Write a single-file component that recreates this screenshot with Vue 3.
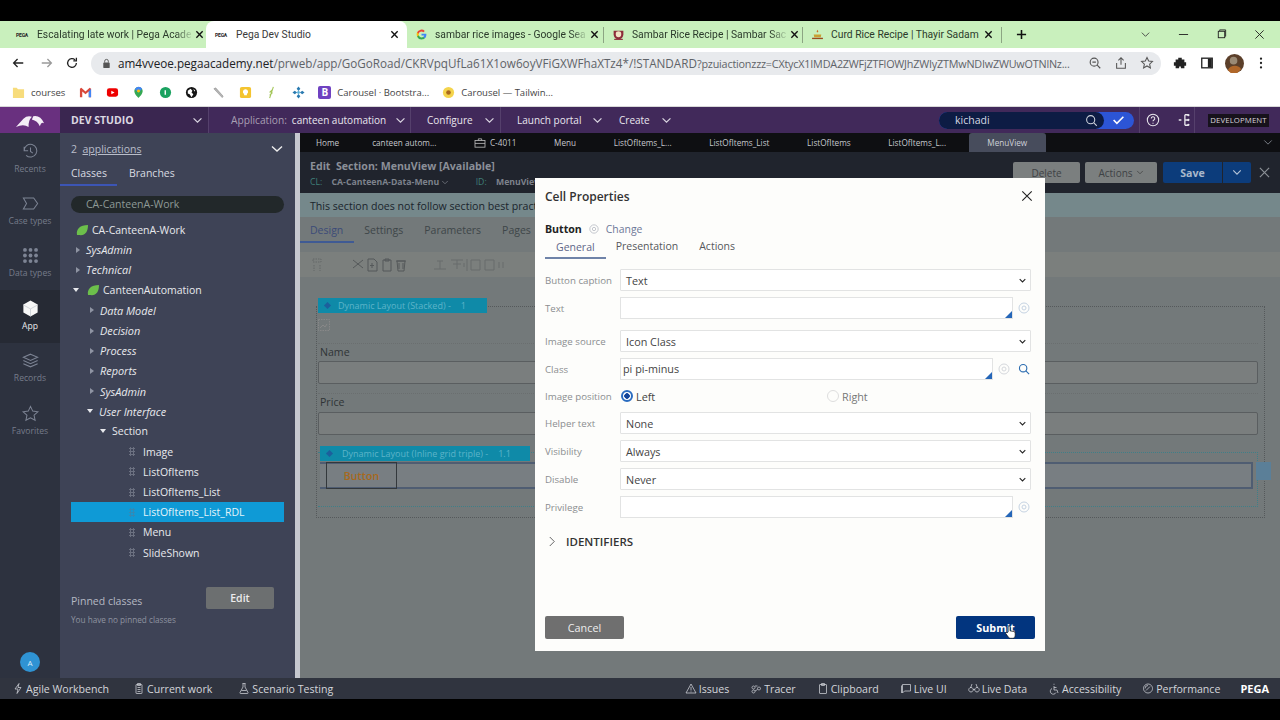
<script setup>
const tabs = [
  { title: 'Escalating late work | Pega Acade', fav: 'pega', cls: 't1' },
  { title: 'Pega Dev Studio', fav: 'pega', cls: 't2 active' },
  { title: 'sambar rice images - Google Sea', fav: 'g', cls: 't3' },
  { title: 'Sambar Rice Recipe | Sambar Sac', fav: 's', cls: 't4' },
  { title: 'Curd Rice Recipe | Thayir Sadam', fav: 'c', cls: 't5' }
]
const rail = [
  { label: 'Recents', d: 'M4 11a8 8 0 1 1 2.5 5.8M4 6v5h5M12 7v5l3 2' },
  { label: 'Case types', d: 'M3 5h13l5 7-5 7H3l4-7z' },
  { label: 'Data types', dots: true },
  { label: 'App', cube: true, active: true },
  { label: 'Records', d: 'M12 4l9 4-9 4-9-4zM3 12l9 4 9-4M3 16l9 4 9-4' },
  { label: 'Favorites', d: 'M12 3l2.8 6 6.5.8-4.8 4.4 1.3 6.4-5.8-3.2-5.8 3.2 1.3-6.4L2.700 9.800 9.200 9z' }
]
const tree = [
  { t: 'CA-CanteenA-Work', x: 76, leaf: true },
  { t: 'SysAdmin', x: 73, arrow: 'r', it: true },
  { t: 'Technical', x: 73, arrow: 'r', it: true },
  { t: 'CanteenAutomation', x: 73, arrow: 'd', leaf: true },
  { t: 'Data Model', x: 87, arrow: 'r', it: true },
  { t: 'Decision', x: 87, arrow: 'r', it: true },
  { t: 'Process', x: 87, arrow: 'r', it: true },
  { t: 'Reports', x: 87, arrow: 'r', it: true },
  { t: 'SysAdmin', x: 87, arrow: 'r', it: true },
  { t: 'User Interface', x: 87, arrow: 'd', it: true },
  { t: 'Section', x: 100, arrow: 'd' },
  { t: 'Image', x: 129, grip: true },
  { t: 'ListOfItems', x: 129, grip: true },
  { t: 'ListOfItems_List', x: 129, grip: true },
  { t: 'ListOfItems_List_RDL', x: 129, grip: true, picked: true },
  { t: 'Menu', x: 129, grip: true },
  { t: 'SlideShown', x: 129, grip: true }
]
const work = ['Home', 'canteen autom...', 'C-4011', 'Menu', 'ListOfItems_L...', 'ListOfItems_List', 'ListOfItems', 'ListOfItems_L...']
const bottomLeft = [
  { t: 'Agile Workbench', d: 'M14 2L6 13h6l-2 9 8-12h-6z' },
  { t: 'Current work', d: 'M7 4h10a1 1 0 0 1 1 1v16a1 1 0 0 1-1 1H7a1 1 0 0 1-1-1V5a1 1 0 0 1 1-1zM9 2h6v4H9zM9 10h6M9 14h6M9 18h6' },
  { t: 'Scenario Testing', d: 'M9 2h6M10 2v7L4 20a1.500 1.500 0 0 0 1.300 2h13.400a1.500 1.500 0 0 0 1.300-2L14 9V2M7 16h10' }
]
const bottomRight = [
  { t: 'Issues', d: 'M12 3l10 18H2zM12 9v7M12 18v1.500' },
  { t: 'Tracer', d: 'M7 7a3 3 0 1 0 .01 0M7 15a3 3 0 1 0 .01 0M18 9a3 3 0 1 0 .01 0M10 7h5M10 17l5-3' },
  { t: 'Clipboard', d: 'M6 4h12a1 1 0 0 1 1 1v16a1 1 0 0 1-1 1H6a1 1 0 0 1-1-1V5a1 1 0 0 1 1-1zM9 2h6v4H9z' },
  { t: 'Live UI', d: 'M5 4h16v13H9l-4 4zM3 6v15' },
  { t: 'Live Data', d: 'M6 10a4.500 4.500 0 1 0 .01 0M18 10a4.500 4.500 0 1 0 .01 0M10 14h4M5 11l3-8M19 11l-3-8' },
  { t: 'Accessibility', d: 'M12 2.500v2M12 7v8h6l2 6M12 10h5M8 12a6 6 0 1 0 8 8' },
  { t: 'Performance', d: 'M12 3a9 9 0 1 0 .01 0M8 16l8-8M6 12a6 6 0 0 1 6-6' }
]
const selectRows = { caption: 'Text', source: 'Icon Class', helper: 'None', vis: 'Always', dis: 'Never' }
</script>

<template>
  <div class="page">
    <div class="topblack"></div>

    <div class="tabstrip">
      <div v-for="tab in tabs" :key="tab.title" class="tab" :class="tab.cls">
        <span v-if="tab.fav === 'pega'" class="fav-pega">PEGA</span>
        <svg v-else-if="tab.fav === 'g'" class="fav" viewBox="0 0 24 24">
          <path d="M21 12.300c0-.7-.1-1.300-.2-1.900H12v3.600h5a4.300 4.300 0 0 1-1.900 2.800v2.300h3c1.800-1.600 2.900-4 2.900-6.800z" fill="#4285f4"/>
          <path d="M12 21c2.500 0 4.500-.8 6.100-2.200l-3-2.300c-.8.600-1.900.9-3.100.9-2.400 0-4.400-1.600-5.100-3.800H3.800v2.400A9 9 0 0 0 12 21z" fill="#34a853"/>
          <path d="M6.900 13.600a5.400 5.400 0 0 1 0-3.200V8H3.800a9 9 0 0 0 0 8z" fill="#fbbc05"/>
          <path d="M12 6.600c1.300 0 2.500.5 3.500 1.400l2.600-2.600A9 9 0 0 0 3.800 8l3.100 2.400C7.600 8.200 9.600 6.600 12 6.600z" fill="#ea4335"/>
        </svg>
        <svg v-else-if="tab.fav === 's'" class="fav" viewBox="0 0 24 24">
          <path d="M3 5h18v7a9 9 0 0 1-18 0z" fill="#8d2d3a"/><path d="M7 9a5 3 0 0 1 10 0v3a5 5 0 0 1-10 0z" fill="#f1e2c4"/><rect x="4" y="20" width="16" height="2" fill="#8d2d3a"/>
        </svg>
        <svg v-else class="fav" viewBox="0 0 24 24">
          <path d="M12 3c1 2 2 3 1 5h-2c-1-2 0-3 1-5z" fill="#c96a24"/><path d="M5 12h14l-1 5H6z" fill="#c9a033"/><rect x="2" y="18" width="20" height="2.500" fill="#9b4a20"/>
        </svg>
        <span class="tab-title">{{ tab.title }}</span>
        <svg class="tab-x" viewBox="0 0 10 10"><path d="M1.500 1.500l7 7M8.500 1.500l-7 7" stroke="#111" stroke-width="1.500"/></svg>
      </div>
      <svg class="plus" viewBox="0 0 12 12"><path d="M6 1v10M1 6h10" stroke="#111" stroke-width="1.700"/></svg>
      <div class="winctl">
        <svg viewBox="0 0 12 12"><path d="M2 4l4 4 4-4" stroke="#444" fill="none"/></svg>
        <svg viewBox="0 0 12 12"><path d="M1 6h10" stroke="#222"/></svg>
        <svg viewBox="0 0 12 12"><rect x="2.500" y="2.500" width="7" height="7" stroke="#222" fill="none"/><path d="M4 2V1h6.500v7H10" stroke="#222" fill="none"/></svg>
        <svg viewBox="0 0 12 12"><path d="M1.500 1.500l9 9M10.500 1.500l-9 9" stroke="#222"/></svg>
      </div>
    </div>

    <div class="toolbar">
      <svg class="nav" viewBox="0 0 16 16"><path d="M14 8H3M7.500 3.500L3 8l4.500 4.500" stroke="#222" stroke-width="1.500" fill="none"/></svg>
      <svg class="nav n2" viewBox="0 0 16 16"><path d="M2 8h11M8.500 3.500L13 8l-4.500 4.500" stroke="#9a9a9a" stroke-width="1.500" fill="none"/></svg>
      <svg class="nav n3" viewBox="0 0 16 16"><path d="M13 8a5 5 0 1 1-1.500-3.600M13 2v3.500H9.500" stroke="#222" stroke-width="1.500" fill="none"/></svg>
      <div class="url">
        <svg class="lock" viewBox="0 0 12 12"><rect x="2.500" y="5" width="7" height="6" rx="1" fill="#555"/><path d="M4 5V3.500a2 2 0 0 1 4 0V5" stroke="#555" fill="none"/></svg>
        <span class="url-text"><b>am4vveoe.pegaacademy.net</b>/prweb/app/GoGoRoad/CKRVpqUfLa61X1ow6oyVFiGXWFhaXTz4*/!STANDARD<span class="url-tail">?pzuiactionzzz=CXtycX1IMDA2ZWFjZTFlOWJhZWIyZTMwNDIwZWUwOTNlNz...</span></span>
        <svg class="uicon" viewBox="0 0 16 16"><circle cx="7" cy="7" r="4.500" stroke="#555" fill="none" stroke-width="1.300"/><path d="M10.500 10.500L14 14M5 7h4" stroke="#555" stroke-width="1.300"/></svg>
        <svg class="uicon" viewBox="0 0 16 16"><path d="M3 8v6h10V8M8 10V3M5 5l3-3 3 3" stroke="#555" fill="none" stroke-width="1.200"/></svg>
        <svg class="uicon" viewBox="0 0 16 16"><path d="M8 1.800l1.900 4 4.300.5-3.200 3 .9 4.300L8 11.400l-3.900 2.200.9-4.300-3.200-3 4.300-.5z" stroke="#555" fill="none" stroke-width="1.200"/></svg>
      </div>
      <svg class="tool t-a" viewBox="0 0 16 16"><path d="M6 2h4v2h3v3h2v4h-2v3H9v-2H7v2H3v-3H1V7h2V4h3z" fill="#222"/></svg>
      <svg class="tool" viewBox="0 0 16 16"><rect x="2" y="2.500" width="12" height="11" stroke="#222" stroke-width="1.500" fill="none"/><rect x="9" y="3" width="4.500" height="10" fill="#222"/></svg>
      <svg class="avatar" viewBox="0 0 20 20"><circle cx="10" cy="10" r="10" fill="#5b3f2a"/><circle cx="9" cy="7" r="4" fill="#9a8a75"/><path d="M3 17c2-6 12-6 14-1l-4 4H6z" fill="#b0672a"/></svg>
      <svg class="kebab" viewBox="0 0 4 16"><circle cx="2" cy="3" r="1.300" fill="#222"/><circle cx="2" cy="8" r="1.300" fill="#222"/><circle cx="2" cy="13" r="1.300" fill="#222"/></svg>
    </div>

    <div class="bookmarks">
      <svg class="bm first" viewBox="0 0 14 14"><path d="M1 2h4l1.500 1.500H13V13H1z" fill="#f7dc7c"/></svg>
      <span class="bm-text courses">courses</span>
      <svg class="bm" viewBox="0 0 14 14"><path d="M1 3v9h2.500V6L7 9l3.500-3v6H13V3l-1.500-1L7 6 2.500 2z" fill="#d9483b"/><path d="M10.500 6L13 3v9h-2.500z" fill="#4285f4"/></svg>
      <svg class="bm" viewBox="0 0 14 14"><rect x="1" y="2.500" width="12" height="9" rx="2.500" fill="#e00"/><path d="M5.700 5v4l3.500-2z" fill="#fff"/></svg>
      <svg class="bm" viewBox="0 0 14 14"><path d="M7 1a4.500 4.500 0 0 0-4.500 4.500C2.500 9 7 13 7 13s4.500-4 4.500-7.500A4.500 4.500 0 0 0 7 1z" fill="#34a853"/><path d="M3 3.500A4.500 4.500 0 0 1 11 3L7 7z" fill="#4285f4"/><circle cx="7" cy="5.500" r="1.600" fill="#fbbc05"/></svg>
      <svg class="bm" viewBox="0 0 14 14"><circle cx="7" cy="7" r="6" fill="#1aa260"/><path d="M6 4.500h1.500v5H6z" fill="#fff"/></svg>
      <svg class="bm" viewBox="0 0 14 14"><circle cx="7" cy="7" r="6" fill="#151515"/><path d="M3 5l3-2 2 2-1 2 2 2-2 3-2-3-2-1zM9 3l2 2-1 1z" fill="#fff"/></svg>
      <svg class="bm" viewBox="0 0 14 14"><path d="M2 3l2-1 8 9-1 1.500z" fill="#b5b5b5" stroke="#777" stroke-width=".5"/></svg>
      <svg class="bm" viewBox="0 0 14 14"><rect x="1" y="1" width="12" height="12" rx="2" fill="#f4c430"/><path d="M7 3.500a2.700 2.700 0 0 0-1.500 5V10h3V8.500A2.700 2.700 0 0 0 7 3.500z" fill="#fff"/></svg>
      <svg class="bm" viewBox="0 0 14 14"><path d="M9 1L5 13M8 4l-3 3M8 7l-3 3" stroke="#a4c65a" stroke-width="1.200"/></svg>
      <svg class="bm" viewBox="0 0 14 14"><path d="M7 .5L9 3 7 5.500 5 3zM7 8.500L9 11l-2 2.500L5 11zM.5 7L3 5l2.500 2L3 9zM8.500 7L11 5l2.500 2L11 9z" fill="#2a7ab0"/><circle cx="7" cy="7" r="1.500" fill="#58b0d8"/></svg>
      <span class="bm-b">B</span>
      <span class="bm-text">Carousel · Bootstra...</span>
      <svg class="bm tw" viewBox="0 0 14 14"><circle cx="7" cy="7" r="6" fill="#f4d44c"/><circle cx="7" cy="7" r="2.500" fill="#a9691e"/></svg>
      <span class="bm-text">Carousel — Tailwin...</span>
    </div>

    <header class="pega">
      <div class="logo">
        <svg viewBox="0 0 32 16"><path d="M1 15L9 6Q13 2.500 18 4Q14 8 14.500 15Q9 11 1 15z" fill="#f4eef6"/><path d="M19.500 3.500Q27 2 31 11Q28 9 26.500 14Q24 8.500 18 7z" fill="#f4eef6"/></svg>
      </div>
      <div class="ds">
        <strong>DEV STUDIO</strong>
        <svg class="chev" viewBox="0 0 12 8"><path d="M1.500 1.500L6 6l4.500-4.500" /></svg>
      </div>
      <div class="app">
        <span class="dim">Application:</span>
        <span class="appname">canteen automation</span>
        <svg class="chev" viewBox="0 0 12 8"><path d="M1.500 1.500L6 6l4.500-4.500" /></svg>
      </div>
      <div class="menu m1">Configure<svg class="chev" viewBox="0 0 12 8"><path d="M1.500 1.500L6 6l4.500-4.500" /></svg></div>
      <div class="menu m2">Launch portal<svg class="chev" viewBox="0 0 12 8"><path d="M1.500 1.500L6 6l4.500-4.500" /></svg></div>
      <div class="menu m3">Create<svg class="chev" viewBox="0 0 12 8"><path d="M1.500 1.500L6 6l4.500-4.500" /></svg></div>
      <div class="hright">
        <div class="search">
          <div class="search-in">
            <span>kichadi</span>
            <svg viewBox="0 0 16 16"><circle cx="7" cy="7" r="5" stroke="#cfd3dc" fill="none" stroke-width="1.300"/><path d="M10.700 10.700L14.500 14.500" stroke="#cfd3dc" stroke-width="1.300"/></svg>
          </div>
          <svg class="check" viewBox="0 0 16 12"><path d="M2 6l4 4 8-8" stroke="#fff" stroke-width="2" fill="none"/></svg>
        </div>
        <div class="hicons">
          <svg viewBox="0 0 16 16"><circle cx="8" cy="8" r="6.500" stroke="#e8e6ec" fill="none" stroke-width="1.200"/><path d="M6 6.300a2 2 0 1 1 3 1.700c-.7.400-1 .8-1 1.500M8 11v1.200" stroke="#e8e6ec" fill="none" stroke-width="1.200"/></svg>
          <svg viewBox="0 0 16 16"><path d="M9 2h4M9 2v12M9 8h4M9 14h4M2 8h3" stroke="#e8e6ec" stroke-width="1.500" fill="none"/><circle cx="13" cy="2.500" r="1.300" fill="#e8e6ec"/><circle cx="13" cy="8" r="1.300" fill="#e8e6ec"/><circle cx="13" cy="13.500" r="1.300" fill="#e8e6ec"/></svg>
        </div>
        <span class="dev">DEVELOPMENT</span>
      </div>
    </header>

    <div class="body">
      <nav class="rail">
        <div v-for="item in rail" :key="item.label" class="rail-item" :class="{ on: item.active }">
          <svg class="rail-ic" viewBox="0 0 24 24">
            <template v-if="item.dots">
              <template v-for="r in [5, 12, 19]" :key="r">
                <circle v-for="c in [5, 12, 19]" :key="c" :cx="c" :cy="r" r="2.400" fill="#7d8494"/>
              </template>
            </template>
            <template v-else-if="item.cube">
              <path d="M12 2l9 5v10l-9 5-9-5V7z" fill="#f7f7f7"/>
              <path d="M3 7.500l9 5 9-5M12 12.500V22" stroke="#c9ccd2" fill="none"/>
            </template>
            <path v-else :d="item.d" fill="none" stroke="#7d8494" stroke-width="1.300"/>
          </svg>
          <span>{{ item.label }}</span>
        </div>
        <div class="rail-avatar">A</div>
      </nav>

      <aside class="side">
        <div class="apps">
          <span>2&nbsp; <u>applications</u></span>
          <svg viewBox="0 0 12 8"><path d="M1 1.500L6 6l5-4.500" stroke="#eee" stroke-width="1.400" fill="none"/></svg>
        </div>
        <div class="stabs"><span class="c">Classes</span><span class="b">Branches</span></div>
        <div class="filter">CA-CanteenA-Work</div>
        <ul class="tree">
          <li v-for="(row, i) in tree" :key="i" :class="{ picked: row.picked }" :style="{ paddingLeft: row.x - 71 + 'px' }">
            <i v-if="row.arrow" class="arrow" :class="row.arrow"></i>
            <svg v-if="row.leaf" class="leaf" viewBox="0 0 12 12"><path d="M1 11C0 5 4 1 12 1c0 7-3 11-9 10z" fill="#6cbf4b"/></svg>
            <span v-if="row.grip" class="grip"></span>
            <span :class="{ it: row.it }">{{ row.t }}</span>
          </li>
        </ul>
        <div class="pinned">
          <div class="pinned-top"><span>Pinned classes</span><button class="edit">Edit</button></div>
          <p>You have no pinned classes</p>
        </div>
      </aside>
      <div class="split"></div>

      <main class="main">
        <div class="worktabs">
          <span v-for="(w, i) in work" :key="i" class="wt">
            <svg v-if="w === 'C-4011'" viewBox="0 0 14 12"><rect x="1" y="3" width="12" height="8" stroke="#bbb" fill="none"/><path d="M5 3V1h4v2M1 6.500h12" stroke="#bbb" fill="none"/></svg>{{ w }}
          </span>
          <span class="wt-on">MenuView</span>
          <svg class="wt-more" viewBox="0 0 12 8"><path d="M1.500 1.500L6 6l4.500-4.500" stroke="#8a8f99" fill="none"/></svg>
        </div>

        <div class="edit-head">
          <div class="eh-text">
            <h1>Edit&nbsp; Section: MenuView [Available]</h1>
            <p><em>CL:</em> <b>CA-CanteenA-Data-Menu</b> <svg viewBox="0 0 12 8"><path d="M1.500 1.500L6 6l4.500-4.500" stroke="#8d929b" fill="none"/></svg> <em class="id">ID:</em> <b>MenuView</b></p>
          </div>
          <div class="eh-btns">
            <span class="gbtn del">Delete</span>
            <span class="gbtn act">Actions <svg viewBox="0 0 12 8"><path d="M1.500 1.500L6 6l4.500-4.500" stroke="#333" fill="none"/></svg></span>
            <span class="save">Save</span>
            <span class="savedd"><svg viewBox="0 0 12 8"><path d="M1.500 1.500L6 6l4.500-4.500" stroke="#b5c3d6" stroke-width="1.400" fill="none"/></svg></span>
            <svg class="ehx" viewBox="0 0 12 12"><path d="M1 1l10 10M11 1L1 11" stroke="#8b9096" stroke-width="1.300"/></svg>
          </div>
        </div>

        <div class="alert">This section does not follow section best practices</div>
        <div class="dtabs">
          <span class="on">Design</span><span>Settings</span><span>Parameters</span><span>Pages</span>
        </div>
        <div class="itoolbar">
          <svg viewBox="0 0 12 16" class="it1"><path d="M1 2h8v3H1zM2 8v6M8 8v6" stroke="#646869" fill="none" stroke-dasharray="1.500 1"/></svg>
          <svg viewBox="0 0 56 16" class="it2"><path d="M1 3l10 8M1 11l10-8" stroke="#55595a" fill="none"/><path d="M16 2h6l3 3v9h-9zM20 6v5M18 8.500h4M31 3h8v11h-8zM33 2h4v2h-4zM45 4h8l-1 10h-6zM44 4h10M47 6v6M51 6v6" stroke="#55595a" fill="none"/></svg>
          <svg viewBox="0 0 92 16" class="it3"><path d="M1 12h12M7 4v8M4 4h6M18 3h12M24 3v9M20 7h8M34 2v12M31 6v4M38 3h9v10h-9zM52 3h9v10h-9zM66 5v6M70 5v6" stroke="#696c6d" fill="none"/></svg>
        </div>

        <div class="canvas">
          <div class="outer">
            <div class="chip c1"><i></i>Dynamic Layout (Stacked) -<b>1</b></div>
            <svg class="imgicon" viewBox="0 0 12 12"><rect x=".5" y=".5" width="11" height="11" stroke="#888" fill="none" stroke-dasharray="1.500 1"/><path d="M2 9l3-3 2 2 2-3" stroke="#888" fill="none"/></svg>
            <label>Name</label>
            <div class="field"></div>
            <label class="price">Price</label>
            <div class="field second"></div>
            <div class="inner">
              <div class="chip c2"><i></i>Dynamic Layout (Inline grid triple) -<b>1.1</b></div>
              <div class="cell">
                <span class="btn-preview">Button</span>
                <span class="handle"></span>
              </div>
            </div>
          </div>
        </div>
      </main>
    </div>

    <footer class="bottom">
      <span v-for="b in bottomLeft" :key="b.t" class="bi l">
        <svg viewBox="0 0 24 24"><path :d="b.d" fill="none" stroke="#cfd2d8" stroke-width="1.500"/></svg>{{ b.t }}
      </span>
      <span class="bspacer"></span>
      <span v-for="b in bottomRight" :key="b.t" class="bi r">
        <svg viewBox="0 0 24 24"><path :d="b.d" fill="none" stroke="#cfd2d8" stroke-width="1.500"/></svg>{{ b.t }}
      </span>
      <strong class="bpega">PEGA</strong>
    </footer>
    <div class="botblack"></div>

    <section class="modal">
      <div class="mhead">
        <h2>Cell Properties</h2>
        <svg viewBox="0 0 14 14"><path d="M1.500 1.500l11 11M12.500 1.500l-11 11" stroke="#222" stroke-width="1.300"/></svg>
      </div>
      <div class="mbtn">
        <strong>Button</strong>
        <svg viewBox="0 0 12 12"><circle cx="6" cy="6" r="5" stroke="#b9bdc5" fill="none"/><circle cx="6" cy="6" r="2" stroke="#b9bdc5" fill="none"/></svg>
        <a>Change</a>
      </div>
      <div class="mtabs"><span class="on">General</span><span>Presentation</span><span>Actions</span></div>

      <div class="frow r1"><label>Button caption</label><div class="dd">{{ selectRows.caption }}<svg viewBox="0 0 10 6"><path d="M1 1l4 4 4-4" stroke="#222" stroke-width="1.500" fill="none"/></svg></div></div>
      <div class="frow r2"><label>Text</label><div class="inp w393"><i class="corner"></i></div><svg class="tgt" viewBox="0 0 12 12"><circle cx="6" cy="6" r="5" stroke="#c5d3e2" fill="none"/><circle cx="6" cy="6" r="2" stroke="#c5d3e2" fill="none"/></svg></div>
      <div class="frow r3"><label>Image source</label><div class="dd">{{ selectRows.source }}<svg viewBox="0 0 10 6"><path d="M1 1l4 4 4-4" stroke="#222" stroke-width="1.500" fill="none"/></svg></div></div>
      <div class="frow r4"><label>Class</label><div class="inp w373 val">pi pi-minus<i class="corner"></i></div><svg class="tgt" viewBox="0 0 12 12"><circle cx="6" cy="6" r="5" stroke="#d5d8dc" fill="none"/><circle cx="6" cy="6" r="2" stroke="#d5d8dc" fill="none"/></svg><svg class="mag" viewBox="0 0 14 14"><circle cx="6" cy="6" r="4.300" stroke="#2b6cb0" fill="none" stroke-width="1.300"/><path d="M9.200 9.200L13 13" stroke="#2b6cb0" stroke-width="1.300"/></svg></div>
      <div class="frow r5"><label>Image position</label>
        <div class="radios">
          <span class="radio on"><i></i>Left</span>
          <span class="radio off"><i></i>Right</span>
        </div>
      </div>
      <div class="frow r6"><label>Helper text</label><div class="dd">{{ selectRows.helper }}<svg viewBox="0 0 10 6"><path d="M1 1l4 4 4-4" stroke="#222" stroke-width="1.500" fill="none"/></svg></div></div>
      <div class="frow r7"><label>Visibility</label><div class="dd">{{ selectRows.vis }}<svg viewBox="0 0 10 6"><path d="M1 1l4 4 4-4" stroke="#222" stroke-width="1.500" fill="none"/></svg></div></div>
      <div class="frow r7"><label>Disable</label><div class="dd">{{ selectRows.dis }}<svg viewBox="0 0 10 6"><path d="M1 1l4 4 4-4" stroke="#222" stroke-width="1.500" fill="none"/></svg></div></div>
      <div class="frow r7"><label>Privilege</label><div class="inp w393"><i class="corner"></i></div><svg class="tgt" viewBox="0 0 12 12"><circle cx="6" cy="6" r="5" stroke="#c5d3e2" fill="none"/><circle cx="6" cy="6" r="2" stroke="#c5d3e2" fill="none"/></svg></div>

      <div class="ident">
        <svg viewBox="0 0 8 14"><path d="M1 1l6 6-6 6" stroke="#444" fill="none" stroke-width="1.100"/></svg>
        <span>IDENTIFIERS</span>
      </div>

      <div class="mfoot">
        <span class="cancel">Cancel</span>
        <span class="submit">Submit
          <svg class="hand" viewBox="0 0 14 18"><path d="M4 9V2.500a1.200 1.200 0 0 1 2.400 0V7.500l5 1c1 .2 1.600.8 1.600 1.800V13c0 2-1 4-3.500 4H7c-1.500 0-2.500-1-3.500-2.500L1 11c-.6-1 .8-2 1.700-1.200z" fill="#fff" stroke="#111" stroke-width=".9"/></svg>
        </span>
      </div>
    </section>
  </div>
</template>

<style>
html, body { margin: 0; background: #000; }
</style>

<style scoped>
* { box-sizing: border-box; }
.page { position: relative; width: 1280px; height: 720px; overflow: hidden; display: flex; flex-direction: column; background: #000; font-family: "Open Sans", "Noto Sans", sans-serif; }
.topblack { height: 21px; flex: none; background: #000; }
.botblack { height: 21px; flex: none; background: #000; }

/* browser tabs */
.tabstrip { height: 27px; flex: none; display: flex; align-items: center; background: #c9f0bd; padding-left: 8px; position: relative; font-family: Roboto, "Open Sans", sans-serif; }
.tab { height: 27px; display: flex; align-items: center; padding: 0 0 0 8px; font-size: 10.3px; color: #2b3a2b; position: relative; flex: none; }
.t1 { width: 198px; }
.t2 { width: 201px; }
.t3 { width: 197px; border-right: 1px solid #8ca583; height: 16px; }
.t4 { width: 199px; border-right: 1px solid #8ca583; height: 16px; }
.t5 { width: 199px; border-right: 1px solid #8ca583; height: 16px; }
.tab.active { background: #fff; border-radius: 8px 8px 0 0; color: #3a3a3a; padding-left: 9px; }
.fav-pega { width: 14px; font-size: 5px; font-weight: 700; letter-spacing: -.2px; color: #222; margin-right: 7px; flex: none; }
.fav { width: 13px; height: 13px; margin-right: 7px; flex: none; }
.tab-title { flex: 1; white-space: nowrap; -webkit-mask-image: linear-gradient(90deg, #000 90%, rgba(0,0,0,.15)); mask-image: linear-gradient(90deg, #000 90%, rgba(0,0,0,.15)); }
.tab-x { width: 9px; height: 9px; margin: 0 8px 0 4px; flex: none; }
.t2 .tab-title, .t5 .tab-title { -webkit-mask-image: none; mask-image: none; }
.plus { width: 11px; height: 11px; margin-left: 14px; }
.winctl { margin-left: auto; display: flex; gap: 27px; padding-right: 15px; align-items: center; }
.winctl svg { width: 11px; height: 11px; }

/* address bar */
.toolbar { height: 30px; flex: none; background: #fff; display: flex; align-items: center; padding-left: 11px; }
.nav { width: 14px; height: 14px; flex: none; }
.nav.n2 { margin-left: 15px; }
.nav.n3 { margin-left: 11px; }
.url { margin-left: 12px; width: 1070px; height: 23px; border-radius: 12px; background: #e8eaed; display: flex; align-items: center; padding: 0 0 0 10px; flex: none; }
.lock { width: 11px; height: 11px; flex: none; margin-right: 6px; }
.url-text { font-size: 11.7px; color: #5f6368; white-space: nowrap; width: 958px; flex: none; }
.url-text b { font-weight: 400; color: #202124; }
.url-tail { font-size: 10.8px; letter-spacing: -.2px; }
.uicon { width: 14px; height: 14px; flex: none; margin-left: 12px; }
.tool { width: 14px; height: 14px; flex: none; margin-left: 13px; }
.tool.t-a { margin-left: 12px; }
.avatar { width: 19px; height: 19px; margin-left: 11px; flex: none; }
.kebab { width: 4px; height: 14px; margin-left: 15px; flex: none; }

/* bookmarks */
.bookmarks { height: 29px; flex: none; background: #fff; display: flex; align-items: center; padding-left: 12px; font-size: 9.5px; color: #444; border-bottom: 1px solid #d8d8d8; }
.bm { width: 13px; height: 13px; flex: none; margin-right: 13.600px; }
.bm.first { margin-right: 6px; }
.bm-text { white-space: nowrap; margin-right: 13px; }
.courses { width: 34px; margin-right: 14px; }
.bm-b { width: 13px; height: 13px; background: #6f42c1; color: #fff; font-size: 10px; font-weight: 700; display: flex; align-items: center; justify-content: center; border-radius: 2px; margin-right: 6px; flex: none; }
.bm.tw { margin-right: 6px; }

/* pega header */
.pega { height: 26px; flex: none; display: flex; align-items: stretch; background: #41295a; color: #e9e6ee; font-size: 10px; }
.logo { width: 60px; flex: none; background: #69307f; display: flex; align-items: center; justify-content: center; }
.logo svg { width: 32px; height: 15px; }
.ds { width: 149px; flex: none; background: #3a2650; display: flex; align-items: center; padding-left: 11px; border-right: 1px solid #55406c; }
.ds strong { font-size: 10.5px; font-weight: 700; color: #dcd8e2; }
.ds .chev { margin-left: auto; margin-right: 5px; }
.chev { width: 11px; height: 7px; fill: none; stroke: #d9d4e0; stroke-width: 1.400; flex: none; }
.app { width: 202px; flex: none; display: flex; align-items: center; padding-left: 22px; border-right: 1px solid #55406c; white-space: nowrap; }
.dim { color: #a89fb3; margin-right: 5px; font-size: 10.2px; flex: none; }
.appname { font-size: 10px; flex: none; }
.app .chev { margin-left: 9px; }
.menu { display: flex; align-items: center; flex: none; white-space: nowrap; }
.menu .chev { margin-left: 11px; }
.m1 { width: 90px; padding-left: 16px; border-right: 1px solid #55406c; }
.m2 { width: 102px; padding-left: 16px; }
.m3 { padding-left: 16px; }
.hright { margin-left: auto; display: flex; align-items: center; }
.search { width: 195px; height: 17px; background: #2c55d6; border-radius: 9px; display: flex; align-items: center; margin-right: 5px; }
.search-in { width: 165px; height: 17px; border-radius: 9px; background: #0d1c44; display: flex; align-items: center; justify-content: space-between; padding: 0 6px 0 16px; font-size: 10.5px; color: #d5d8e3; }
.search-in svg { width: 13px; height: 13px; }
.check { width: 13px; height: 10px; margin-left: 8px; }
.hicons { height: 26px; width: 56px; display: flex; align-items: center; gap: 17px; padding-left: 6px; border-left: 1px solid #55406c; border-right: 1px solid #55406c; }
.hicons svg { width: 14px; height: 14px; flex: none; }
.dev { background: #17121c; color: #d9d6dd; font-size: 7.800px; letter-spacing: .1px; width: 61px; text-align: center; height: 13px; line-height: 13px; margin: 0 11px 0 13px; white-space: nowrap; }

/* body */
.body { flex: 1; min-height: 0; display: flex; }
.rail { width: 60px; flex: none; background: #2d323f; display: grid; grid-auto-rows: 52.4px; position: relative; align-content: start; }
.rail-item { display: flex; flex-direction: column; align-items: center; justify-content: center; gap: 2px; padding-bottom: 2px; font-size: 8.6px; color: #767c8a; }
.rail-ic { width: 19px; height: 19px; }
.rail-item.on { background: #262a34; color: #e8e9ec; }
.rail-avatar { position: absolute; left: 20px; bottom: 6px; width: 20px; height: 20px; border-radius: 50%; background: #2f93d3; color: #d9ecf8; font-size: 8px; display: flex; align-items: center; justify-content: center; }
.side { width: 235px; flex: none; background: #3e4356; color: #e6e7ea; font-size: 10.5px; display: flex; flex-direction: column; }
.apps { display: flex; justify-content: space-between; align-items: center; padding: 6px 12px 0 11px; height: 26px; color: #b9bdc9; }
.apps svg { width: 12px; height: 8px; }
.stabs { display: flex; height: 27px; padding-left: 11px; position: relative; align-items: center; color: #d9dbe1; }
.stabs .b { margin-left: 22px; }
.stabs::after { content: ""; position: absolute; left: 0; bottom: 0; width: 57px; height: 2px; background: #3c55b5; }
.filter { margin: 10px 11px 0 11px; height: 17px; border-radius: 9px; background: #22282a; color: #8e9a97; padding-left: 15px; line-height: 17px; }
.tree { list-style: none; margin: 6.500px 0 0 11px; padding: 0; width: 213px; }
.tree li { height: 20.2px; display: flex; align-items: center; white-space: nowrap; color: #e8e9ed; }
.tree li.picked { background: #0f9ad6; color: #e5f4fb; }
.arrow { display: inline-block; width: 0; height: 0; flex: none; }
.arrow.r { border-left: 4px solid #8f94a3; border-top: 3.500px solid transparent; border-bottom: 3.500px solid transparent; margin: 0 6px 0 3px; }
.arrow.d { border-top: 4px solid #e8e9ed; border-left: 3.500px solid transparent; border-right: 3.500px solid transparent; margin-right: 6px; }
.arrow.d + .leaf { margin-left: 2px; }
.leaf { width: 12px; height: 12px; margin-right: 4px; flex: none; }
.grip { width: 6px; height: 9px; margin-right: 8px; flex: none; background: radial-gradient(circle, #6b7080 1px, transparent 1.200px) 0 0 / 3px 3px; }
.picked .grip { opacity: .4; }
.it { font-style: italic; font-size: 10.900px; }
.pinned { margin: 24.500px 0 0 11px; }
.pinned-top { display: flex; justify-content: space-between; align-items: flex-start; padding-right: 21px; color: #b5b8c3; }
.pinned-top span { padding-top: 7px; }
.edit { width: 68px; height: 22px; background: #6c6f70; color: #ececec; border: none; border-radius: 2px; font: 600 10.5px "Open Sans", sans-serif; }
.pinned p { margin: 5px 0 0; font-size: 8.200px; color: #8f93a0; }
.split { width: 5px; flex: none; background: #c6c8cf; }

/* main */
.main { flex: 1; min-width: 0; background: #73797a; display: flex; flex-direction: column; }
.worktabs { height: 19px; flex: none; background: #0e0f12; display: flex; align-items: center; padding-left: 16px; gap: 37.600px; font-size: 8.200px; color: #c5c7cc; white-space: nowrap; position: relative; }
.wt { display: flex; align-items: center; }
.wt:first-child { margin-right: -4.600px; }
.wt svg { width: 12px; height: 10px; margin-right: 4px; }
.wt-on { width: 77px; height: 19px; background: #474c5c; color: #cdd0d8; border-radius: 3px 3px 0 0; display: flex; align-items: center; justify-content: center; margin-left: -15px; }
.wt-more { position: absolute; right: 7px; top: 6px; width: 10px; height: 7px; }
.edit-head { height: 41px; flex: none; background: #20242d; display: flex; padding-left: 10px; position: relative; }
.eh-text h1 { margin: 7px 0 0; font-size: 10.6px; font-weight: 700; color: #8b8f98; }
.eh-text p { margin: 3px 0 0; font-size: 8.700px; color: #7d828c; white-space: nowrap; }
.eh-text em { font-style: normal; color: #3f7f78; }
.eh-text em.id { margin-left: 24px; }
.eh-text p b { margin-left: 7px; }
.eh-text p svg { width: 8px; height: 5px; }
.eh-btns { position: absolute; right: 10px; top: 10px; display: flex; align-items: center; font-size: 10px; }
.gbtn { height: 21px; background: #7b7f7f; color: #3e4245; border-radius: 2px; display: flex; align-items: center; justify-content: center; }
.gbtn svg { width: 8px; height: 5px; margin-left: 3px; }
.del { width: 67px; margin-right: 5px; }
.act { width: 72px; margin-right: 6px; }
.save { width: 59px; height: 21px; background: #0c3c7b; color: #aab8cb; font-weight: 700; font-size: 10.6px; display: flex; align-items: center; justify-content: center; border-radius: 2px 0 0 2px; }
.savedd { width: 28px; height: 21px; background: #0c3c7b; margin-left: 1px; display: flex; align-items: center; justify-content: center; border-radius: 0 2px 2px 0; }
.savedd svg { width: 10px; height: 7px; }
.ehx { width: 11px; height: 11px; margin-left: 8px; }
.alert { height: 24px; flex: none; background: #75888b; color: #1a242c; font-size: 10.6px; line-height: 26px; padding-left: 10px; white-space: nowrap; }
.dtabs { height: 26px; flex: none; display: flex; align-items: center; gap: 21px; font-size: 10.5px; color: #3e4649; padding-left: 10px; position: relative; }
.dtabs .on { color: #3c4b78; }
.dtabs::after { content: ""; position: absolute; left: 0; width: 54px; bottom: 0; height: 2px; background: #3f5a94; }
.itoolbar { height: 25px; margin-top: 9px; flex: none; background: #7b7f7d; display: flex; align-items: center; padding-left: 12px; }
.it1 { width: 12px; height: 16px; margin-right: 28px; flex: none; }
.it2 { width: 56px; height: 16px; flex: none; }
.it3 { width: 92px; height: 16px; margin-left: 25px; flex: none; }
.canvas { padding: 29px 15px 0 16px; }
.outer { height: 212px; border: 1px dotted #55595b; padding: 0 6px 0 1px; display: flex; flex-direction: column; }
.chip { background: #0f8aa8; color: #5db4c8; font-size: 9px; height: 15px; display: flex; align-items: center; white-space: nowrap; }
.chip i { width: 5px; height: 5px; background: #1d5f9c; transform: rotate(45deg); margin: 0 8px 0 7px; }
.chip b { font-weight: 400; margin-left: 10px; }
.chip.c1 { width: 169px; margin-top: -9px; flex: none; }
.imgicon { width: 12px; height: 12px; margin-top: 6px; flex: none; }
.outer label { font-size: 10.600px; color: #2f3436; margin-top: 12px; line-height: 16px; padding-left: 2px; border-top: 1px dotted #6a6e6f; }
.outer label.price { margin-top: 9px; }
.field { height: 23px; margin-top: 1px; background: #7a7e7e; border: 1px solid #5a5e60; border-radius: 2px; flex: none; }
.field.second { margin-top: 2px; }
.inner { position: relative; margin-top: 17px; height: 55px; border: 1px dotted #3f7f88; border-width: 1px 1px 1px 0; flex: none; }
.chip.c2 { width: 210px; margin-left: 2px; position: relative; top: -7px; margin-bottom: -7px; }
.chip.c2 i { margin: 0 10px 0 7px; }
.cell { position: relative; margin: 8px 4px 0 2px; height: 27px; background: #787e82; border-bottom: 2px solid #4f5d72; border-top: 2px solid #4f5d72; border-right: 2px solid #4f5d72; top: -7px; }
.btn-preview { position: absolute; left: 6px; top: -2px; width: 71px; height: 27px; border: 1px solid #33383c; color: #a8691c; font-size: 10.600px; font-weight: 600; display: flex; align-items: center; justify-content: center; }
.handle { position: absolute; right: -20px; top: -2px; width: 15px; height: 18px; background: #5b7f98; }

/* bottom bar */
.bottom { height: 21px; flex: none; background: #30343f; display: flex; align-items: center; font-size: 10.600px; color: #d4d6db; padding-left: 12px; white-space: nowrap; }
.bi { display: flex; align-items: center; margin-right: 21px; }
.bi svg { width: 12px; height: 13px; margin-right: 2px; }
.bi.l:nth-child(1) { margin-right: 24px; }
.bi.l:nth-child(2) { margin-right: 26px; }
.bspacer { flex: 1; }
.bpega { color: #fff; font-size: 11px; font-weight: 700; margin-right: 11px; margin-left: -1px; }

/* modal */
.modal { position: absolute; left: 535px; top: 178px; width: 510px; height: 473px; background: #fdfdfb; padding: 0 14px 0 10px; display: flex; flex-direction: column; color: #333; font-size: 10.800px; }
.mhead { display: flex; justify-content: space-between; align-items: center; height: 36px; flex: none; }
.mhead h2 { margin: 0; font-size: 12px; font-weight: 600; color: #333; }
.mhead svg { width: 12px; height: 12px; margin-right: -2px; }
.mbtn { display: flex; align-items: center; height: 14px; margin-top: 8px; flex: none; }
.mbtn strong { color: #222; font-weight: 700; font-size: 10.600px; }
.mbtn svg { width: 10px; height: 10px; margin: 0 7px; }
.mbtn a { color: #6d7898; font-size: 10.4px; }
.mtabs { display: flex; gap: 21px; height: 24px; flex: none; align-items: center; margin-top: -2px; padding-left: 11px; color: #56585c; font-size: 10.500px; }
.mtabs .on { color: #5d6688; position: relative; margin-top: 1px; }
.mtabs .on::after { content: ""; position: absolute; left: -11px; right: -11px; bottom: -5px; height: 2px; background: #6f83a8; }
.frow { display: flex; align-items: center; flex: none; position: relative; }
.frow label { width: 75px; flex: none; color: #8b8d90; font-size: 9.700px; white-space: nowrap; padding-top: 1px; }
.dd { width: 411px; height: 22px; border: 1px solid #e2e3e3; border-radius: 1px; display: flex; align-items: center; justify-content: space-between; padding: 0 4px 0 5px; background: #fff; color: #444; }
.dd svg { width: 7px; height: 5px; }
.inp { height: 22px; border: 1px solid #e2e3e3; background: #fff; position: relative; }
.w393 { width: 393px; }
.w373 { width: 373px; }
.val { padding-left: 2px; line-height: 20px; color: #444; }
.corner { position: absolute; right: 0; bottom: 0; border-left: 7px solid transparent; border-bottom: 7px solid #2566b8; }
.tgt { width: 12px; height: 12px; margin-left: 5px; }
.mag { width: 12px; height: 12px; margin-left: 8px; }
.r1 { margin-top: 11px; }
.r2 { margin-top: 6px; }
.r3 { margin-top: 11px; }
.r4 { margin-top: 6px; }
.r5 { height: 14px; margin-top: 9px; }
.r6 { margin-top: 9px; }
.r7 { margin-top: 6px; }
.radios { display: flex; }
.radio { display: flex; align-items: center; color: #444; }
.radio i { width: 12px; height: 12px; border-radius: 50%; margin-right: 3px; }
.radio.on { width: 207px; padding-left: 1px; }
.radio.on i { border: 2px solid #2a6cc0; background: radial-gradient(circle, #12449a 2.500px, #fff 3px); }
.radio.off { color: #777; }
.radio.off i { border: 1px solid #dedede; }
.ident { display: flex; align-items: center; margin-top: 14px; height: 18px; flex: none; }
.ident svg { width: 6px; height: 11px; margin: 0 11px 0 4px; }
.ident span { font-size: 11.500px; font-weight: 600; color: #333; }
.mfoot { margin-top: auto; margin-bottom: 12px; display: flex; justify-content: space-between; flex: none; margin-right: -4px; }
.cancel { width: 79px; height: 23px; background: #6f6f6f; color: #eee; border-radius: 2px; display: flex; align-items: center; justify-content: center; }
.submit { width: 79px; height: 23px; background: #02357f; color: #fff; font-weight: 700; border-radius: 2px; display: flex; align-items: center; justify-content: center; position: relative; }
.hand { position: absolute; left: 49px; top: 8px; width: 11px; height: 16px; }
</style>
